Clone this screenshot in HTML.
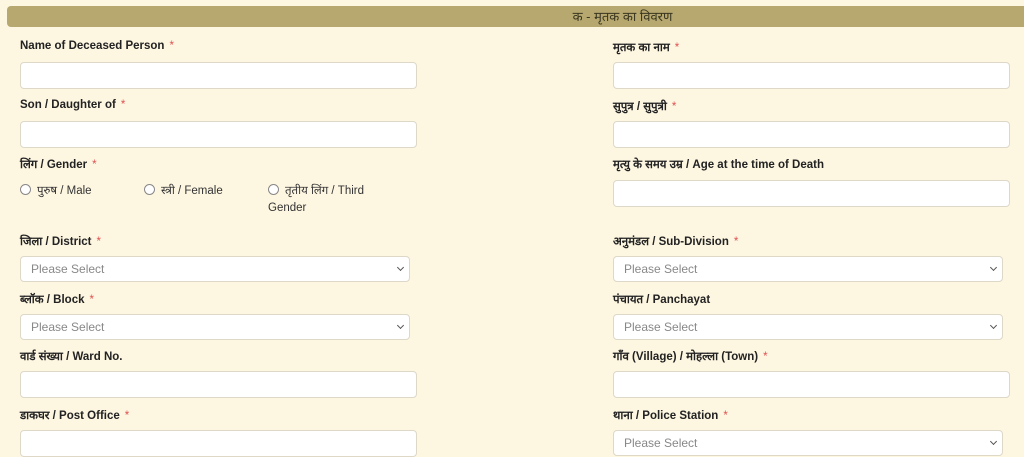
<!DOCTYPE html>
<html><head><meta charset="utf-8"><style>
body{margin:0;width:1024px;height:456px;background:#fdf6e1;font-family:"Liberation Sans","Noto Sans CJK SC",sans-serif;overflow:hidden;position:relative}
.hdr{position:absolute;left:7px;top:6px;width:1017px;height:21px;background:#b6a86f;border-radius:4px 0 0 4px;color:#3a3620;font-size:13px;text-align:center;line-height:21px;text-indent:214px}
.l{position:absolute;font-size:11.5px;font-weight:bold;color:#222;margin-top:2px}
.l i{color:#e05050;font-style:normal;font-weight:normal;margin-left:5px}
.in{position:absolute;height:25px;background:#fff;border:1px solid #ddd8c8;border-radius:4px;width:395px}
.sel{position:absolute;height:24px;background:#fff;border:1px solid #ddd8c8;border-radius:4px;width:388px;font-size:12px;color:#888;line-height:24px;text-indent:10px}
.sel:after{content:"";position:absolute;right:6px;top:8px;width:4px;height:4px;border-right:1.5px solid #555;border-bottom:1.5px solid #555;transform:rotate(45deg)}
.r{position:absolute;font-size:11.5px;color:#333}
.r b{display:inline-block;width:9px;height:9px;border:1px solid #888;border-radius:50%;background:#fff;margin-right:6px;vertical-align:-1px}
</style></head><body>
<div class="hdr">क - मृतक का विवरण</div>

<div class="l" style="left:20px;top:38px">Name of Deceased Person<i>*</i></div>
<div class="in" style="left:20px;top:62px"></div>
<div class="l" style="left:20px;top:97px">Son / Daughter of<i>*</i></div>
<div class="in" style="left:20px;top:121px"></div>
<div class="l" style="left:20px;top:155px">लिंग / Gender<i>*</i></div>
<div class="r" style="left:20px;top:183px"><b></b>पुरुष / Male</div>
<div class="r" style="left:144px;top:183px"><b></b>स्त्री / Female</div>
<div class="r" style="left:268px;top:183px;width:120px;line-height:17px"><b></b>तृतीय लिंग / Third Gender</div>
<div class="l" style="left:20px;top:232px">जिला / District<i>*</i></div>
<div class="sel" style="left:20px;top:256px">Please Select</div>
<div class="l" style="left:20px;top:290px">ब्लॉक / Block<i>*</i></div>
<div class="sel" style="left:20px;top:314px">Please Select</div>
<div class="l" style="left:20px;top:347px">वार्ड संख्या / Ward No.</div>
<div class="in" style="left:20px;top:371px"></div>
<div class="l" style="left:20px;top:406px">डाकघर / Post Office<i>*</i></div>
<div class="in" style="left:20px;top:430px"></div>

<div class="l" style="left:613px;top:38px">मृतक का नाम<i>*</i></div>
<div class="in" style="left:613px;top:62px"></div>
<div class="l" style="left:613px;top:97px">सुपुत्र / सुपुत्री<i>*</i></div>
<div class="in" style="left:613px;top:121px"></div>
<div class="l" style="left:613px;top:155px">मृत्यु के समय उम्र / Age at the time of Death</div>
<div class="in" style="left:613px;top:180px"></div>
<div class="l" style="left:613px;top:232px">अनुमंडल / Sub-Division<i>*</i></div>
<div class="sel" style="left:613px;top:256px">Please Select</div>
<div class="l" style="left:613px;top:290px">पंचायत / Panchayat</div>
<div class="sel" style="left:613px;top:314px">Please Select</div>
<div class="l" style="left:613px;top:347px">गाँव (Village) / मोहल्ला (Town)<i>*</i></div>
<div class="in" style="left:613px;top:371px"></div>
<div class="l" style="left:613px;top:406px">थाना / Police Station<i>*</i></div>
<div class="sel" style="left:613px;top:430px">Please Select</div>
</body></html>
